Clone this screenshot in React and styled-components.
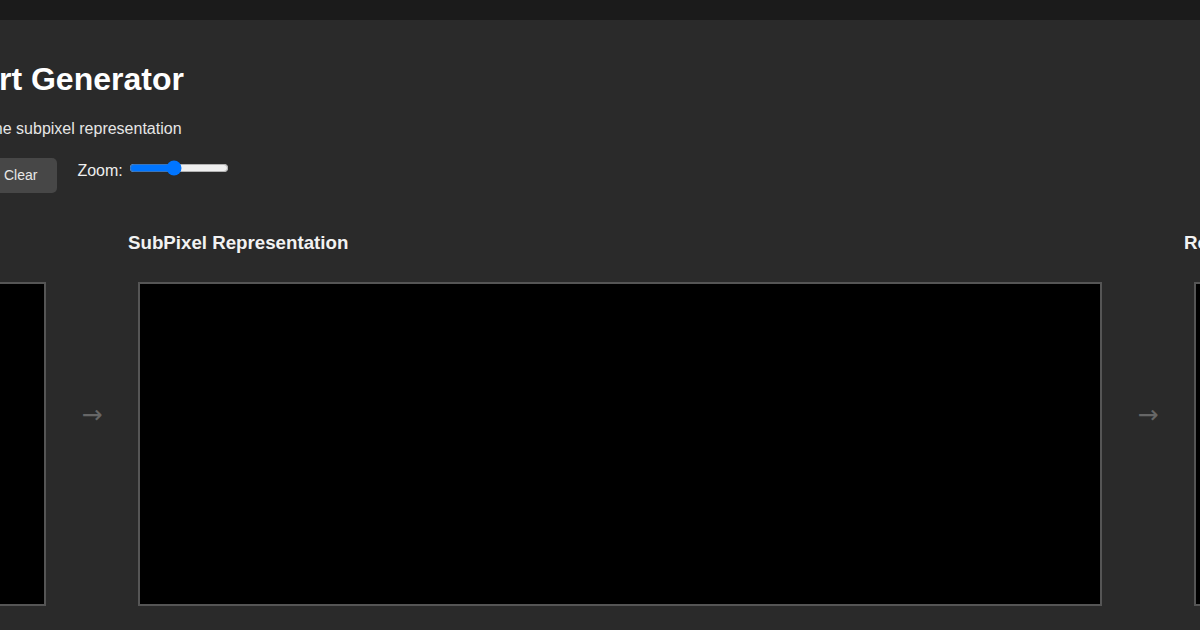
import React, { useState } from "react";
import styled, { createGlobalStyle } from "styled-components";

const GlobalStyle = createGlobalStyle`
  html, body {
    margin: 0;
    padding: 0;
    background: #2a2a2a;
    overflow: hidden;
    font-family: "Liberation Sans", Arial, sans-serif;
    color: #e6e6e6;
  }
`;

const TopBar = styled.div`
  height: 20px;
  background: #1b1b1b;
`;

/* The page is shown scrolled sideways: the content starts left of the viewport */
const Page = styled.main`
  width: max-content;
  margin-left: -187px;
  padding: 20px;
`;

const Title = styled.h1`
  margin: 21.44px 0;
  font-size: 32px;
  font-weight: 700;
  color: #ffffff;
`;

const Subtitle = styled.p`
  margin: 16px 0 16px -1px;
  font-size: 16px;
  color: #e6e6e6;
`;

const Controls = styled.div`
  display: flex;
  align-items: flex-start;
  gap: 10px;
  margin: 20px 0 20px -1px;
`;

const Button = styled.button`
  font-family: "Liberation Sans", Arial, sans-serif;
  font-size: 14px;
  line-height: 15px;
  padding: 10px 20px;
  border: none;
  border-radius: 5px;
  background: #474747;
  color: #e8e8e8;
  cursor: pointer;
`;

const ZoomGroup = styled.label`
  display: flex;
  align-items: flex-start;
  gap: 6px;
  margin-left: 10px;
  font-size: 16px;
  color: #eeeeee;
`;

const ZoomText = styled.span`
  padding-top: 4px;
`;

const Slider = styled.input`
  width: 100px;
  margin: 2px 0;
`;

const Row = styled.div`
  display: flex;
  align-items: center;
  margin-left: -1px;
`;

const Column = styled.section`
  flex: none;
  display: flex;
  flex-direction: column;
`;

const Heading = styled.h3`
  margin: 18.72px 0;
  font-size: 18.72px;
  font-weight: 700;
  color: #f2f2f2;
`;

const Canvas = styled.canvas`
  display: block;
  margin: 10px;
  background: #000000;
  border: 2px solid #555555;
`;

const Arrow = styled.div`
  flex: none;
  width: 72px;
  text-align: center;
  font-family: "DejaVu Sans", sans-serif;
  font-size: 25px;
  line-height: 30px;
  color: #666666;
`;

export default function App() {
  const [zoom, setZoom] = useState(5);
  return (
    <>
      <GlobalStyle />
      <TopBar />
      <Page>
        <Title>SubPixel Art Generator</Title>
        <Subtitle>Draw a pattern to see the subpixel representation</Subtitle>
        <Controls>
          <Button>Random Pattern</Button>
          <Button>Clear</Button>
          <ZoomGroup>
            <ZoomText>Zoom:</ZoomText>
            <Slider
              type="range"
              min="1"
              max="10"
              value={zoom}
              onChange={(e) => setZoom(Number(e.target.value))}
            />
          </ZoomGroup>
        </Controls>
        <Row>
          <Column>
            <Heading>Original</Heading>
            <Canvas width={200} height={320} />
          </Column>
          <Arrow>→</Arrow>
          <Column>
            <Heading>SubPixel Representation</Heading>
            <Canvas width={960} height={320} />
          </Column>
          <Arrow>→</Arrow>
          <Column>
            <Heading>Rendered Result</Heading>
            <Canvas width={960} height={320} />
          </Column>
        </Row>
      </Page>
    </>
  );
}
